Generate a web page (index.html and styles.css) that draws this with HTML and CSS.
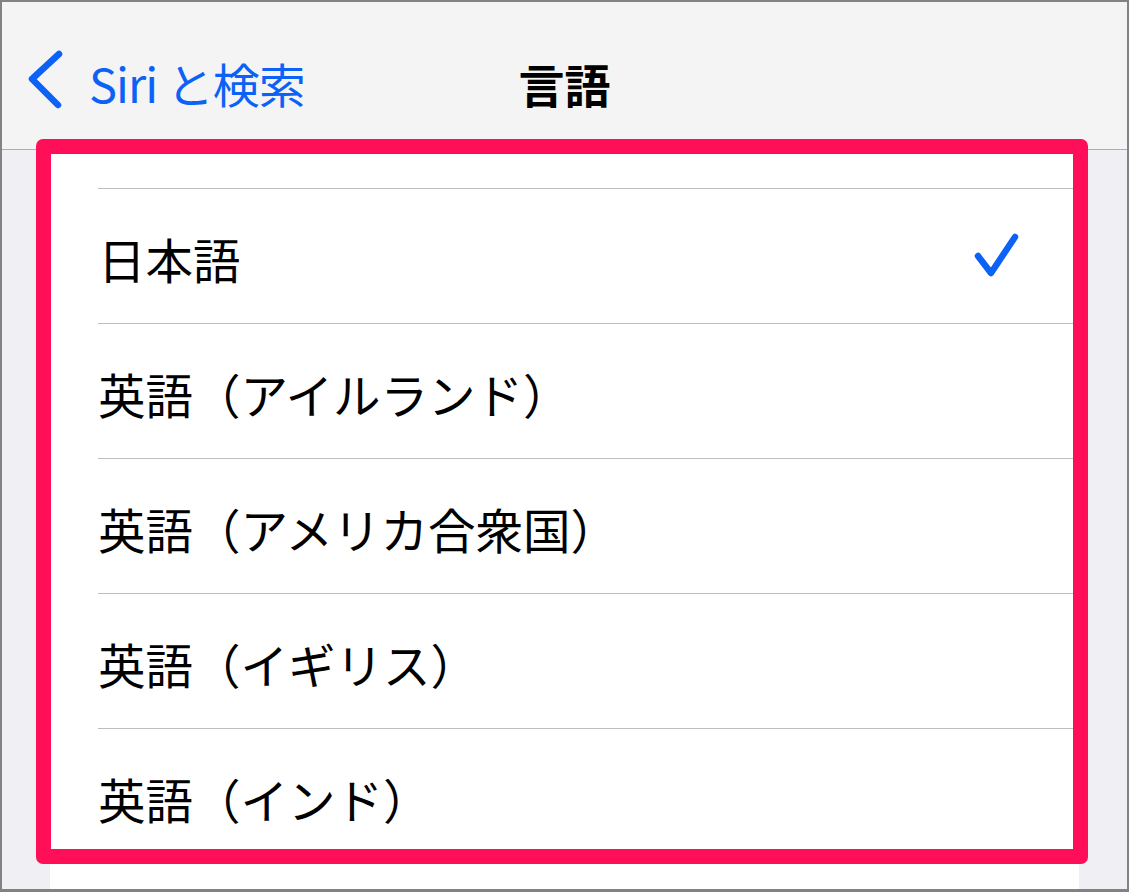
FILE: index.html
```html
<!DOCTYPE html>
<html lang="ja">
<head>
<meta charset="utf-8">
<link rel="stylesheet" href="styles.css">
</head>
<body>
<div class="frame">
  <header class="nav">
    <div class="back">
      <svg class="chev" width="40" height="62" viewBox="0 0 40 62"><path d="M31 5 L4 30 L30 56" fill="none" stroke="#0c62f6" stroke-width="6.5" stroke-linecap="round" stroke-linejoin="round"/></svg>
      <span class="back-label">Siri と検索</span>
    </div>
    <h1 class="title">言語</h1>
    <div class="spacer"></div>
  </header>
  <main class="content">
    <ul class="list">
      <li class="row partial"></li>
      <li class="row"><span>日本語</span>
        <svg class="check" width="48" height="48" viewBox="0 0 48 48"><path d="M5 24 L18 41 L42 5" fill="none" stroke="#0c62f6" stroke-width="6.5" stroke-linecap="round" stroke-linejoin="round"/></svg>
      </li>
      <li class="row"><span>英語（アイルランド）</span></li>
      <li class="row"><span>英語（アメリカ合衆国）</span></li>
      <li class="row"><span>英語（イギリス）</span></li>
      <li class="row last"><span>英語（インド）</span></li>
    </ul>
  </main>
  <div class="highlight"></div>
</div>
</body>
</html>
```

FILE: styles.css
```css
html, body {
  margin: 0;
  padding: 0;
}
body {
  font-family: "Noto Sans CJK JP", "Noto Sans", sans-serif;
  background: #ffffff;
}
.frame {
  position: relative;
  width: 1129px;
  height: 892px;
  box-sizing: border-box;
  border: 2px solid #828282;
  border-bottom-width: 3px;
  background: #efeff4;
  overflow: hidden;
  display: flex;
  flex-direction: column;
}
.nav {
  height: 147px;
  flex: none;
  background: #f4f4f4;
  border-bottom: 1px solid #aeaeae;
  display: grid;
  grid-template-columns: 1fr auto 1fr;
  align-items: center;
}
.back {
  display: flex;
  align-items: center;
  padding-left: 26px;
  padding-top: 14px;
  color: #0c62f6;
}
.chev {
  display: block;
  margin-top: -6px;
}
.back-label {
  margin-left: 21px;
  font-size: 47px;
  line-height: 1;
  letter-spacing: -1px;
}
.title {
  margin: 0;
  padding-top: 14px;
  font-size: 46px;
  font-weight: 700;
  line-height: 1;
  color: #000;
}
.content {
  flex: 1;
  margin: 0 48px;
  background: #ffffff;
}
.list {
  list-style: none;
  margin: 0;
  padding: 0 0 0 48px;
}
.row {
  border-bottom: 1px solid #bdbdbd;
  display: flex;
  align-items: center;
  justify-content: space-between;
  font-size: 47.5px;
  color: #000;
  padding-top: 4px;
  box-sizing: border-box;
  height: 135px;
}
.row.partial {
  height: 39px;
  padding: 0;
}
.row.last {
  border-bottom: none;
}
.check {
  display: block;
  margin-right: 58px;
  margin-top: -4px;
}
.highlight {
  position: absolute;
  left: 34px;
  top: 137px;
  width: 1052px;
  height: 725px;
  box-sizing: border-box;
  border: 15px solid #ff0f58;
  border-radius: 7px;
  pointer-events: none;
}
```
